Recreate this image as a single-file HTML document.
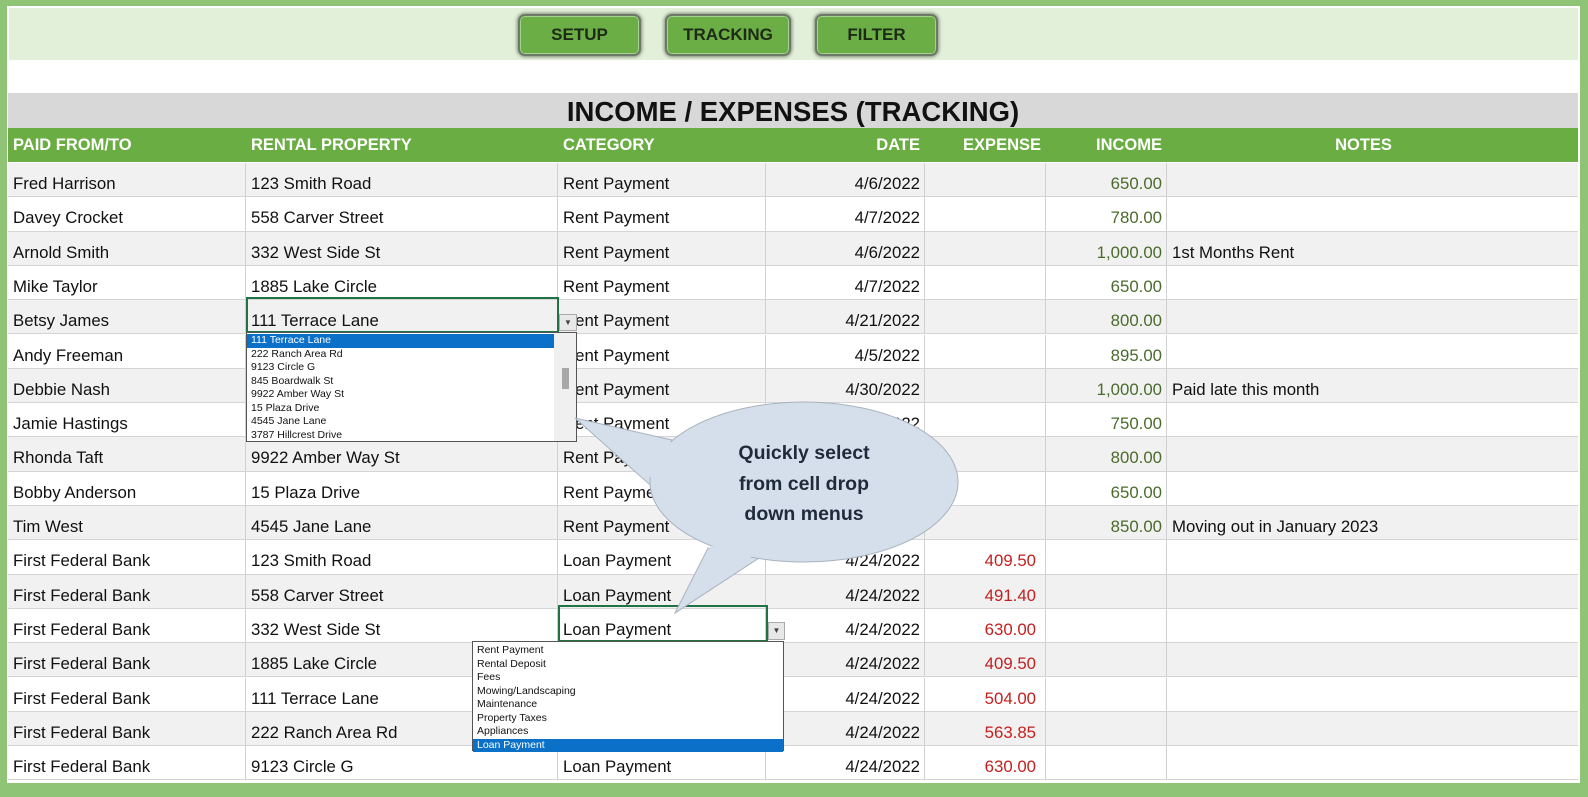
<!DOCTYPE html>
<html><head><meta charset="utf-8"><style>
*{margin:0;padding:0;box-sizing:border-box}
body{width:1588px;height:797px;background:#8fc476;position:relative;overflow:hidden;font-family:"Liberation Sans",sans-serif}
.abs{position:absolute}
#page{left:7px;top:6px;width:1573px;height:777px;background:#fff}
.btn{top:14px;height:42px;background:#6aae45;border:2px solid #6e7a68;border-radius:7px;box-shadow:0 0 3px 1px #7d8b78, inset 0 0 0 1px #a5d28e;font-weight:bold;font-size:17px;color:#1e2a16;text-align:center;line-height:38px}
.row{position:absolute;left:8px;width:1570px;height:34.3px;border-bottom:1px solid #d4d4d4}
.c{position:absolute;top:0;height:100%;border-right:1px solid #d0d0d0;font-size:16.8px;line-height:41px;color:#111;white-space:nowrap;padding:0 5px;overflow:visible}
.r{text-align:right;padding-right:4px}
.exp{color:#c4201f}.inc{color:#4a6b2c}
.hd{position:absolute;top:0;height:100%;font-size:16.5px;font-weight:bold;color:#fff;line-height:34px;padding:0 5px}
.dd{background:#fff;border:1px solid #555;font-size:10.5px;color:#111}
.dd div{height:13.5px;line-height:13px;padding-left:4px}
.dd .sel{background:#0a70c8;color:#fff}
</style></head><body>
<div id="page" class="abs"></div>
<div class="abs" style="left:9px;top:8px;width:1569px;height:52px;background:#e2efd9"></div>
<div class="abs btn" style="left:518px;width:123px">SETUP</div>
<div class="abs btn" style="left:665px;width:126px">TRACKING</div>
<div class="abs btn" style="left:815px;width:123px">FILTER</div>
<div class="abs" style="left:8px;top:93px;width:1570px;height:35px;background:#d8d8d8;text-align:center;font-weight:bold;font-size:27.5px;line-height:37px;color:#111">INCOME / EXPENSES (TRACKING)</div>
<div class="abs" style="left:8px;top:128px;width:1570px;height:34px;background:#6aad42">
<div class="hd" style="left:0">PAID FROM/TO</div>
<div class="hd" style="left:238px">RENTAL PROPERTY</div>
<div class="hd" style="left:550px">CATEGORY</div>
<div class="hd" style="left:758px;width:159px;text-align:right">DATE</div>
<div class="hd" style="left:917px;width:121px;text-align:right">EXPENSE</div>
<div class="hd" style="left:1038px;width:121px;text-align:right">INCOME</div>
<div class="hd" style="left:1159px;width:393px;text-align:center">NOTES</div>
</div>
<div id="rows"></div>
<script>
var d=[["Fred Harrison","123 Smith Road","Rent Payment","4/6/2022","","650.00",""],
["Davey Crocket","558 Carver Street","Rent Payment","4/7/2022","","780.00",""],
["Arnold Smith","332 West Side St","Rent Payment","4/6/2022","","1,000.00","1st Months Rent"],
["Mike Taylor","1885 Lake Circle","Rent Payment","4/7/2022","","650.00",""],
["Betsy James","111 Terrace Lane","Rent Payment","4/21/2022","","800.00",""],
["Andy Freeman","222 Ranch Area Rd","Rent Payment","4/5/2022","","895.00",""],
["Debbie Nash","9123 Circle G","Rent Payment","4/30/2022","","1,000.00","Paid late this month"],
["Jamie Hastings","845 Boardwalk St","Rent Payment","4/1/2022","","750.00",""],
["Rhonda Taft","9922 Amber Way St","Rent Payment","4/1/2022","","800.00",""],
["Bobby Anderson","15 Plaza Drive","Rent Payment","4/1/2022","","650.00",""],
["Tim West","4545 Jane Lane","Rent Payment","4/1/2022","","850.00","Moving out in January 2023"],
["First Federal Bank","123 Smith Road","Loan Payment","4/24/2022","409.50","",""],
["First Federal Bank","558 Carver Street","Loan Payment","4/24/2022","491.40","",""],
["First Federal Bank","332 West Side St","Loan Payment","4/24/2022","630.00","",""],
["First Federal Bank","1885 Lake Circle","Loan Payment","4/24/2022","409.50","",""],
["First Federal Bank","111 Terrace Lane","Loan Payment","4/24/2022","504.00","",""],
["First Federal Bank","222 Ranch Area Rd","Loan Payment","4/24/2022","563.85","",""],
["First Federal Bank","9123 Circle G","Loan Payment","4/24/2022","630.00","",""]];
var h="";
for(var i=0;i<d.length;i++){var r=d[i];
h+='<div class="row" style="top:'+(163+i*34.3)+'px;background:'+(i%2?'#fff':'#f1f1f1')+'">'+
'<div class="c" style="left:0;width:238px">'+r[0]+'</div>'+
'<div class="c" style="left:238px;width:312px">'+r[1]+'</div>'+
'<div class="c" style="left:550px;width:208px">'+r[2]+'</div>'+
'<div class="c r" style="left:758px;width:159px">'+r[3]+'</div>'+
'<div class="c r exp" style="left:917px;width:121px;padding-right:9px">'+r[4]+'</div>'+
'<div class="c r inc" style="left:1038px;width:121px">'+r[5]+'</div>'+
'<div class="c" style="left:1159px;width:411px;border-right:none">'+r[6]+'</div></div>';}
document.getElementById("rows").innerHTML=h;
</script>
<div class="abs" style="left:246px;top:297px;width:313px;height:36px;border:2px solid #217346"></div>
<div class="abs" style="left:559px;top:314px;width:18px;height:17px;background:#e8e8e8;border:1px solid #aaa;font-size:8px;text-align:center;line-height:15px;color:#444">▼</div>
<div class="abs dd" style="left:246px;top:332px;width:331px;height:110px;padding-top:1px">
<div class="sel" style="width:307px">111 Terrace Lane</div><div>222 Ranch Area Rd</div><div>9123 Circle G</div><div>845 Boardwalk St</div><div>9922 Amber Way St</div><div>15 Plaza Drive</div><div>4545 Jane Lane</div><div>3787 Hillcrest Drive</div>
<div class="abs" style="left:307px;top:0;width:22px;height:108px;background:#f0f0f0;padding:0"></div>
<div class="abs" style="left:315px;top:35px;width:7px;height:21px;background:#a8a8a8;padding:0"></div>
</div>
<div class="abs" style="left:558px;top:605px;width:210px;height:37px;border:2px solid #217346"></div>
<div class="abs" style="left:768px;top:622px;width:17px;height:18px;background:#e8e8e8;border:1px solid #aaa;font-size:8px;text-align:center;line-height:16px;color:#444">▼</div>
<div class="abs dd" style="left:472px;top:641px;width:312px;height:110px;padding-top:2px">
<div>Rent Payment</div><div>Rental Deposit</div><div>Fees</div><div>Mowing/Landscaping</div><div>Maintenance</div><div>Property Taxes</div><div>Appliances</div><div class="sel">Loan Payment</div>
</div>
<svg class="abs" style="left:0;top:0" width="1588" height="797">
<polygon points="575,418 672,440 658,492" fill="#d5dfec" stroke="#a9b2bd"/>
<polygon points="675,613 708,548 762,556" fill="#d5dfec" stroke="#a9b2bd"/>
<ellipse cx="804" cy="482" rx="154" ry="80" fill="#d5dfec" stroke="#a9b2bd" stroke-width="1"/>
<polygon points="600,425 674,443 661,488" fill="#d5dfec"/>
<polygon points="690,590 711,546 760,552" fill="#d5dfec"/>
<text x="804" y="459" text-anchor="middle" font-family="Liberation Sans,sans-serif" font-weight="bold" font-size="19.5" fill="#1f2a3a">Quickly select</text>
<text x="804" y="490" text-anchor="middle" font-family="Liberation Sans,sans-serif" font-weight="bold" font-size="19.5" fill="#1f2a3a">from cell drop</text>
<text x="804" y="520" text-anchor="middle" font-family="Liberation Sans,sans-serif" font-weight="bold" font-size="19.5" fill="#1f2a3a">down menus</text>
</svg>
</body></html>
